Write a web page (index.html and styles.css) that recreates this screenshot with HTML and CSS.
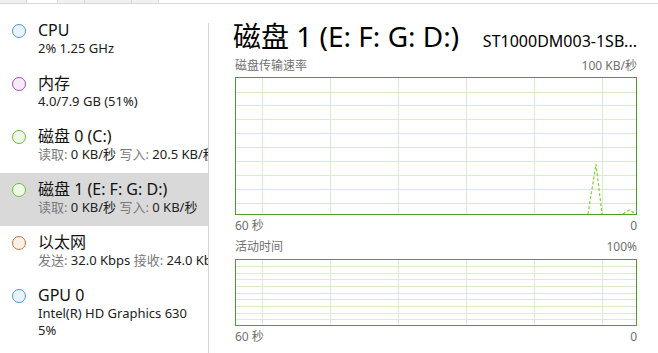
FILE: index.html
```html
<!DOCTYPE html>
<html lang="zh-CN">
<head>
  <meta charset="UTF-8" />
  <meta name="viewport" content="width=device-width, initial-scale=1.0" />
  <title>任务管理器 - 性能</title>
  <link rel="stylesheet" href="styles.css">
</head>
<body>
  <div class="tabs">
    <div class="tab tab-1"></div>
    <div class="tab tab-active"></div>
    <div class="tab tab-3"></div>
    <div class="tab tab-4"></div>
    <div class="tab tab-5"></div>
    <div class="tab-fill"></div>
  </div>

  <div class="layout">
    <div class="sidebar">
      <div class="item">
        <span class="dot dot-cpu"></span>
        <div class="item-body">
          <div class="item-title">CPU</div>
          <div class="item-sub">2% 1.25 GHz</div>
        </div>
      </div>
      <div class="item">
        <span class="dot dot-mem"></span>
        <div class="item-body">
          <div class="item-title">内存</div>
          <div class="item-sub">4.0/7.9 GB (51%)</div>
        </div>
      </div>
      <div class="item">
        <span class="dot dot-disk"></span>
        <div class="item-body">
          <div class="item-title">磁盘 0 (C:)</div>
          <div class="item-sub"><span class="muted">读取:</span> 0 KB/秒 <span class="muted">写入:</span> 20.5 KB/秒</div>
        </div>
      </div>
      <div class="item selected">
        <span class="dot dot-disk"></span>
        <div class="item-body">
          <div class="item-title">磁盘 1 (E: F: G: D:)</div>
          <div class="item-sub"><span class="muted">读取:</span> 0 KB/秒 <span class="muted">写入:</span> 0 KB/秒</div>
        </div>
      </div>
      <div class="item">
        <span class="dot dot-net"></span>
        <div class="item-body">
          <div class="item-title">以太网</div>
          <div class="item-sub"><span class="muted">发送:</span> 32.0 Kbps <span class="muted">接收:</span> 24.0 Kbps</div>
        </div>
      </div>
      <div class="item">
        <span class="dot dot-gpu"></span>
        <div class="item-body">
          <div class="item-title">GPU 0</div>
          <div class="item-sub">Intel(R) HD Graphics 630</div>
          <div class="item-sub">5%</div>
        </div>
      </div>
    </div>

    <div class="divider"></div>

    <div class="main">
      <div class="head">
        <h1>磁盘 1 (E: F: G: D:)</h1>
        <span class="model">ST1000DM003-1SB...</span>
      </div>

      <div class="chart-label">
        <span>磁盘传输速率</span>
        <span>100 KB/秒</span>
      </div>
      <div class="chart chart-tall">
        <svg viewBox="0 0 400 136" preserveAspectRatio="none">
          <g class="grid">
            <line x1="26.5" y1="0" x2="26.5" y2="136" />
            <line x1="94.5" y1="0" x2="94.5" y2="136" />
            <line x1="162.5" y1="0" x2="162.5" y2="136" />
            <line x1="230.5" y1="0" x2="230.5" y2="136" />
            <line x1="298.5" y1="0" x2="298.5" y2="136" />
            <line x1="366.5" y1="0" x2="366.5" y2="136" />
            <line x1="0" y1="14.5" x2="400" y2="14.5" />
            <line x1="0" y1="27.5" x2="400" y2="27.5" />
            <line x1="0" y1="41.5" x2="400" y2="41.5" />
            <line x1="0" y1="55.5" x2="400" y2="55.5" />
            <line x1="0" y1="69.5" x2="400" y2="69.5" />
            <line x1="0" y1="83.5" x2="400" y2="83.5" />
            <line x1="0" y1="97.5" x2="400" y2="97.5" />
            <line x1="0" y1="111.5" x2="400" y2="111.5" />
            <line x1="0" y1="125.5" x2="400" y2="125.5" />
          </g>
          <polyline class="trace" points="352,136 360,86 366,136" />
          <polyline class="trace" points="387,136 393,132 400,136" />
        </svg>
      </div>
      <div class="chart-axis">
        <span>60 秒</span>
        <span>0</span>
      </div>

      <div class="chart-label label-second">
        <span>活动时间</span>
        <span>100%</span>
      </div>
      <div class="chart chart-short">
        <svg viewBox="0 0 400 65" preserveAspectRatio="none">
          <g class="grid">
            <line x1="26.5" y1="0" x2="26.5" y2="65" />
            <line x1="94.5" y1="0" x2="94.5" y2="65" />
            <line x1="162.5" y1="0" x2="162.5" y2="65" />
            <line x1="230.5" y1="0" x2="230.5" y2="65" />
            <line x1="298.5" y1="0" x2="298.5" y2="65" />
            <line x1="366.5" y1="0" x2="366.5" y2="65" />
            <line x1="0" y1="6.5" x2="400" y2="6.5" />
            <line x1="0" y1="13.5" x2="400" y2="13.5" />
            <line x1="0" y1="19.5" x2="400" y2="19.5" />
            <line x1="0" y1="26.5" x2="400" y2="26.5" />
            <line x1="0" y1="33.5" x2="400" y2="33.5" />
            <line x1="0" y1="39.5" x2="400" y2="39.5" />
            <line x1="0" y1="46.5" x2="400" y2="46.5" />
            <line x1="0" y1="53.5" x2="400" y2="53.5" />
            <line x1="0" y1="59.5" x2="400" y2="59.5" />
          </g>
        </svg>
      </div>
      <div class="chart-axis">
        <span>60 秒</span>
        <span>0</span>
      </div>
    </div>
  </div>
</body>
</html>
```

FILE: styles.css
```css
* {
  box-sizing: border-box;
}

body {
  margin: 0;
  background: #ffffff;
  font-family: "Noto Sans", "Noto Sans CJK SC", sans-serif;
  color: #1a1a1a;
  overflow: hidden;
}

.tabs {
  display: flex;
  height: 4px;
}

.tab {
  background: #f0f0f0;
  border-right: 1px solid #d9d9d9;
  border-bottom: 1px solid #d9d9d9;
}

.tab-1 { width: 27px; }
.tab-3 { width: 27px; }
.tab-4 { width: 47px; }
.tab-5 { width: 27px; }

.tab-active {
  width: 31px;
  background: #ffffff;
  border-right: 1px solid #d9d9d9;
}

.tab-fill {
  flex: 1;
  border-bottom: 1px solid #d9d9d9;
}

.layout {
  display: flex;
  height: 349px;
}

/* left list */
.sidebar {
  width: 208px;
  padding-top: 10px;
  overflow: hidden;
  flex: none;
}

.item {
  display: flex;
  gap: 12px;
  min-height: 53px;
  padding: 6px 0 0 12px;
}

.item.selected {
  background: #d9d9d9;
}

.dot {
  width: 14px;
  height: 14px;
  margin-top: 4px;
  border-radius: 50%;
  border: 1.5px solid;
  flex: none;
}

.dot-cpu { border-color: #4b9ad4; background: #eaf3fb; }
.dot-mem { border-color: #a64bbf; background: #f6ecf9; }
.dot-disk { border-color: #6cbf37; background: #eff8e8; }
.dot-net { border-color: #c37333; background: #fbf0e7; }
.dot-gpu { border-color: #4b9ad4; background: #eaf3fb; }

.item-body {
  white-space: nowrap;
}

.item-title {
  font-size: 16px;
  line-height: 20px;
  color: #111;
}

.item-sub {
  font-size: 13px;
  line-height: 17px;
  color: #222;
}

.muted {
  color: #7a7a7a;
}

.divider {
  width: 1px;
  margin-top: 19px;
  background: #d9d9d9;
  flex: none;
}

/* right panel */
.main {
  flex: 1;
  padding: 14px 21px 0 26px;
}

.head {
  display: flex;
  justify-content: space-between;
  align-items: baseline;
}

h1 {
  margin: 0 0 0 -2px;
  font-size: 28px;
  font-weight: normal;
  line-height: 36px;
  color: #000;
}

.model {
  font-size: 16px;
  color: #000;
}

.chart-label,
.chart-axis {
  display: flex;
  justify-content: space-between;
  font-size: 12px;
  line-height: 16px;
  color: #707070;
}

.chart-label {
  margin-top: 4px;
  margin-bottom: 3px;
}

.label-second {
  margin-top: 5px;
  margin-bottom: 4px;
}

.chart-axis {
  margin-top: 3px;
}

.chart {
  border: 1px solid #4f9e25;
}

.chart svg {
  display: block;
  width: 100%;
  height: 100%;
}

.chart-tall {
  height: 138px;
}

.chart-short {
  height: 67px;
}

.grid line {
  stroke: #d9eccb;
  stroke-width: 1;
}

.trace {
  fill: none;
  stroke: #84d02c;
  stroke-width: 1.2;
  stroke-dasharray: 3 2;
}
```
